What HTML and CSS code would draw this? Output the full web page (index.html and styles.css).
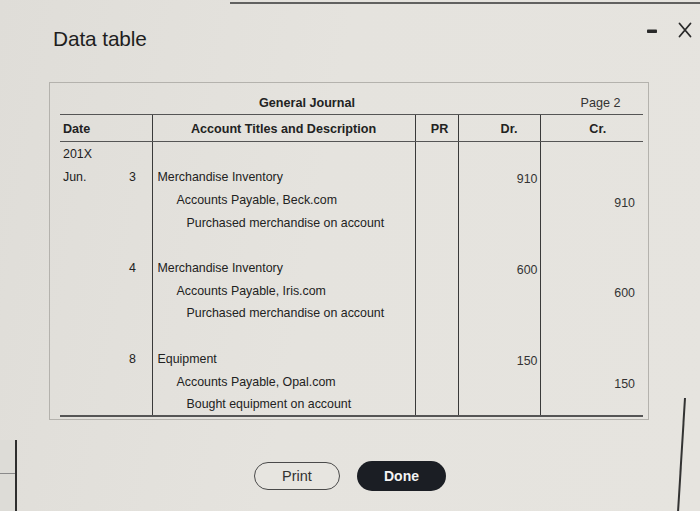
FILE: index.html
```html
<!DOCTYPE html>
<html lang="en">
<head>
<meta charset="utf-8">
<title>Data table</title>
<link rel="stylesheet" href="styles.css">
</head>
<body>
<div class="backdrop-top"></div>
<div class="backdrop-left"><div class="backdrop-left-rule"></div></div>
<div class="backdrop-right"></div>
<div class="dialog">
  <header class="titlebar">
    <h1 class="title">Data table</h1>
    <div class="window-controls">
      <svg class="ctl-min" width="11" height="5" viewBox="0 0 11 5"><rect x="0" y="0.5" width="10" height="3.6" rx="0.8" fill="#2a2a2a"/></svg>
      <svg class="ctl-close" width="14" height="16" viewBox="0 0 14 16"><path d="M1.5 1.5 L12.5 14.5 M12.5 1.5 L1.5 14.5" stroke="#2a2a2a" stroke-width="1.8" stroke-linecap="round" fill="none"/></svg>
    </div>
  </header>

  <section class="sheet">
    <table class="journal">
      <colgroup>
        <col class="c-date"><col class="c-acct"><col class="c-pr"><col class="c-dr"><col class="c-cr">
      </colgroup>
      <thead>
        <tr class="caption-row">
          <th></th>
          <th class="caption" colspan="2">General Journal</th>
          <th></th>
          <th class="page">Page 2</th>
        </tr>
        <tr class="head-row">
          <th class="h-date">Date</th>
          <th class="v h-acct">Account Titles and Description</th>
          <th class="v h-pr">PR</th>
          <th class="v h-dr">Dr.</th>
          <th class="v h-cr">Cr.</th>
        </tr>
      </thead>
      <tbody>
        <tr class="year-row"><td class="date">201X</td><td class="v"></td><td class="v"></td><td class="v"></td><td class="v"></td></tr>

        <tr><td class="date"><span class="mon">Jun.</span><span class="day">3</span></td><td class="v acct l1">Merchandise Inventory</td><td class="v"></td><td class="v amt dr">910</td><td class="v"></td></tr>
        <tr><td></td><td class="v acct l2">Accounts Payable, Beck.com</td><td class="v"></td><td class="v"></td><td class="v amt cr">910</td></tr>
        <tr><td></td><td class="v acct l3">Purchased merchandise on account</td><td class="v"></td><td class="v"></td><td class="v"></td></tr>
        <tr><td></td><td class="v"></td><td class="v"></td><td class="v"></td><td class="v"></td></tr>

        <tr><td class="date"><span class="mon"></span><span class="day">4</span></td><td class="v acct l1">Merchandise Inventory</td><td class="v"></td><td class="v amt dr">600</td><td class="v"></td></tr>
        <tr><td></td><td class="v acct l2">Accounts Payable, Iris.com</td><td class="v"></td><td class="v"></td><td class="v amt cr">600</td></tr>
        <tr><td></td><td class="v acct l3">Purchased merchandise on account</td><td class="v"></td><td class="v"></td><td class="v"></td></tr>
        <tr><td></td><td class="v"></td><td class="v"></td><td class="v"></td><td class="v"></td></tr>

        <tr><td class="date"><span class="mon"></span><span class="day">8</span></td><td class="v acct l1">Equipment</td><td class="v"></td><td class="v amt dr">150</td><td class="v"></td></tr>
        <tr><td></td><td class="v acct l2">Accounts Payable, Opal.com</td><td class="v"></td><td class="v"></td><td class="v amt cr">150</td></tr>
        <tr class="last-row"><td></td><td class="v acct l3">Bought equipment on account</td><td class="v"></td><td class="v"></td><td class="v"></td></tr>
      </tbody>
    </table>
  </section>

  <footer class="actions">
    <button class="btn btn-print" type="button">Print</button>
    <button class="btn btn-done" type="button">Done</button>
  </footer>
</div>
</body>
</html>
```

FILE: styles.css
```css
* { box-sizing: border-box; }

html, body {
  margin: 0;
  padding: 0;
  width: 700px;
  height: 511px;
  overflow: hidden;
}

body {
  background: linear-gradient(100deg, #dfddd8 0%, #e5e3de 45%, #e6e4df 100%);
  font-family: "Liberation Sans", Arial, sans-serif;
  color: #222;
  position: relative;
}

/* edges of the windows behind the dialog */
.backdrop-top {
  position: absolute;
  left: 230px;
  top: 2px;
  width: 470px;
  height: 2px;
  background: #4a4a4a;
  opacity: 0.85;
}
.backdrop-left {
  position: absolute;
  left: 0;
  top: 440px;
  width: 17px;
  height: 71px;
  border-right: 2px solid #2e2e2e;
  background: #dddcd7;
}
.backdrop-left-rule {
  margin-top: 33px;
  height: 1px;
  background: #8a8a8a;
}
.backdrop-right {
  position: absolute;
  left: 684px;
  top: 398px;
  width: 2px;
  height: 115px;
  background: #333;
  transform: rotate(3.5deg);
  transform-origin: top left;
}

.dialog {
  display: flex;
  flex-direction: column;
  height: 511px;
}

.titlebar {
  display: flex;
  justify-content: space-between;
  align-items: flex-start;
  padding: 27px 8px 0 53px;
  height: 82px;
}

.title {
  margin: 0;
  font-size: 20.8px;
  font-weight: normal;
  color: #1e1e1e;
  letter-spacing: -0.1px;
}

.window-controls {
  display: flex;
  align-items: center;
  gap: 20px;
  margin-top: -5px;
}
.ctl-min { margin-top: 2px; }

.sheet {
  margin-left: 49px;
  width: 600px;
  height: 338px;
  border: 1px solid #b4b2ad;
  padding: 10px 0 0 10px;
}

.journal {
  border-collapse: collapse;
  table-layout: fixed;
  width: 583px;
  font-size: 12.4px;
  color: #222;
}

.c-date { width: 92px; }
.c-acct { width: 263px; }
.c-pr { width: 43px; }
.c-dr { width: 82px; }
.c-cr { width: 103px; }

.journal th,
.journal td {
  padding: 0;
  white-space: nowrap;
}

.caption-row th {
  height: 21px;
  border-bottom: 1.5px solid #555;
  font-size: 12.6px;
  vertical-align: middle;
  padding-bottom: 1px;
}
.journal .caption { font-weight: bold; text-align: center; padding-left: 4px; }
.journal .page { font-weight: normal; text-align: center; padding-left: 18px; color: #333; }

.head-row th {
  height: 27px;
  border-bottom: 1.5px solid #555;
  font-size: 12.6px;
  font-weight: bold;
  text-align: center;
  vertical-align: middle;
  padding-top: 2px;
}
.journal .head-row .h-date { text-align: left; padding-left: 3px; }
.journal .head-row .h-pr { padding-left: 6px; }
.journal .head-row .h-dr { padding-left: 20px; }
.journal .head-row .h-cr { padding-left: 12px; }

.v { border-left: 1px solid #3a3a3a; }

.year-row td { height: 25px; }

.journal tbody tr { height: 22.7px; }
.journal tbody td { vertical-align: middle; }

.journal .date {
  padding-left: 3px;
}
.date .mon {
  display: inline-block;
  width: 66px;
}
.date .day {
  display: inline-block;
  width: 4px;
}

.journal .acct.l1 { padding-left: 5px; }
.journal .acct.l2 { padding-left: 24px; }
.journal .acct.l3 { padding-left: 34px; }

.amt {
  text-align: right;
  color: #333;
}
.journal .amt.dr { padding-right: 2px; padding-top: 4px; }
.journal .amt.cr { padding-right: 8px; padding-top: 5px; }

.journal .last-row td {
  height: 19px;
  border-bottom: 2px solid #555;
}

.actions {
  display: flex;
  justify-content: center;
  align-items: center;
  gap: 17px;
  margin-top: 41px;
}

.btn {
  font-family: "Liberation Sans", Arial, sans-serif;
  font-size: 14.5px;
  border-radius: 15px;
  cursor: pointer;
}
.btn-print {
  width: 86px;
  height: 28px;
  background: #e7e5e0;
  border: 1.6px solid #4a4a4a;
  color: #333;
}
.btn-done {
  width: 89px;
  height: 30px;
  background: #1b1e24;
  border: none;
  color: #f4f4f4;
  font-weight: bold;
  font-size: 14px;
}
```
